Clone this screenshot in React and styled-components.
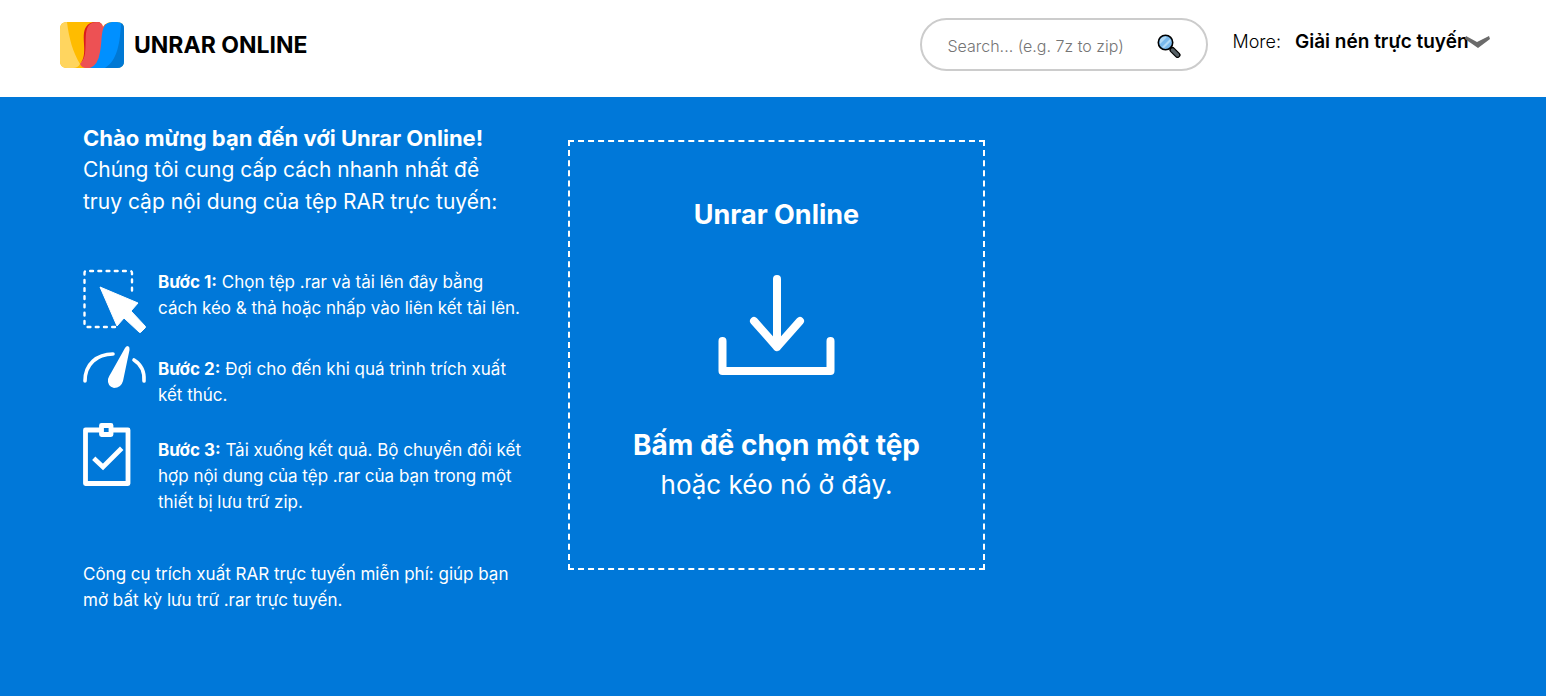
import React from "react";
import styled, { createGlobalStyle } from "styled-components";

const GlobalStyle = createGlobalStyle`
  * { box-sizing: border-box; }
  body {
    margin: 0;
    background: #0078d9;
    font-family: Inter, "Open Sans", sans-serif;
    font-size: 17px;
    line-height: 26px;
  }
  h1, h2, p, ol { margin: 0; padding: 0; }
`;

const Header = styled.header`
  display: flex;
  align-items: center;
  padding: 18px 56px 26px 60px;
  background: #fff;
  color: #000;
`;

const Brand = styled.a`
  display: flex;
  align-items: center;
  gap: 10px;
  margin-right: auto;
  color: #000;
  text-decoration: none;
  white-space: nowrap;
  font-size: 23px;
  font-weight: 700;
`;

const SearchForm = styled.form`
  display: flex;
  align-items: center;
  width: 288px;
  height: 53px;
  padding: 2px 25px 0 25px;
  border: 2px solid #ccc;
  border-radius: 27px;
`;

const SearchInput = styled.input`
  flex: 1;
  min-width: 0;
  padding: 0;
  border: 0;
  outline: 0;
  background: transparent;
  color: #333;
  font-family: inherit;
  font-size: 16px;
  font-weight: 300;
  &::placeholder { color: #757575; opacity: 1; }
`;

const SearchButton = styled.button`
  display: flex;
  padding: 0;
  border: 0;
  background: none;
  cursor: pointer;
`;

const More = styled.div`
  display: flex;
  align-items: center;
  gap: 14px;
  margin-left: 24px;
  padding-bottom: 5px;
  font-size: 18px;
`;

const MoreLabel = styled.label`
  font-weight: 300;
`;

const Picker = styled.div`
  position: relative;
  width: 195px;
  svg {
    position: absolute;
    right: 0;
    top: 7px;
    pointer-events: none;
  }
`;

const Select = styled.select`
  appearance: none;
  display: block;
  width: 100%;
  padding: 0;
  border: 0;
  background: transparent;
  color: #000;
  font-family: inherit;
  font-size: 19px;
  font-weight: 600;
  line-height: 26px;
`;

const Hero = styled.main`
  display: grid;
  grid-template-columns: 440fr 417fr 433fr;
  align-items: start;
  gap: 45px;
  padding: 25px 83px 83px;
  background: #0078d9;
  color: #fff;
`;

const About = styled.section`
  white-space: nowrap;
`;

const Intro = styled.div`
  font-size: 21px;
  line-height: 32px;
`;

const Welcome = styled.h2`
  font-size: 22px;
  font-weight: 700;
`;

const Steps = styled.ol`
  display: grid;
  gap: 13px;
  margin: 51px 0 46px;
  list-style: none;
`;

const StepRow = styled.li`
  display: flex;
  align-items: flex-start;
  gap: 11px;
  svg { flex: none; }
  p { padding-top: ${(p) => p.$drop}px; }
`;

const DropZone = styled.label`
  display: flex;
  flex-direction: column;
  align-items: center;
  margin-top: 18px;
  padding: 53px 20px 63px;
  border: 2px dashed #fff;
  font-size: 26px;
  line-height: 40px;
  text-align: center;
  cursor: pointer;
  svg { margin: 40px 0 49px; }
`;

const DropTitle = styled.h1`
  font-size: 27px;
  font-weight: 700;
`;

const DropPrompt = styled.b`
  font-size: 28px;
`;

const FileInput = styled.input`
  position: absolute;
  width: 1px;
  height: 1px;
  opacity: 0;
`;

const Logo = () => (
  <svg width="64" height="46" viewBox="0 0 64 46" aria-hidden="true">
    <defs>
      <clipPath id="logo-clip">
        <path d="M7 0H37Q42 0 43 5Q46 0 52 0H57Q64 0 64 7V39Q64 46 57 46H7Q0 46 0 39V7Q0 0 7 0Z" />
      </clipPath>
    </defs>
    <g clipPath="url(#logo-clip)">
      <rect width="64" height="46" fill="#ffbc00" />
      <path d="M0 0H7C9 17 13 30 20 42Q18 46 13 46H0Z" fill="#ffd55f" />
      <path d="M20 42C29 32 20 14 26 5Q29 0 36 0H40L30 30Z" fill="#da1c1c" />
      <path d="M20 42C30 34 22 11 29 3Q32 0 37 0H46V46H26Q22 46 20 42Z" fill="#ed5154" />
      <path d="M64 0H52C39 1 43 18 40 30Q38 43 30 46H64Z" fill="#0090ff" />
      <path d="M61 2L64 0V46H45C58 38 60 19 61 2Z" fill="#0078d4" />
    </g>
  </svg>
);

const Magnifier = () => (
  <svg width="24" height="24" viewBox="0 0 24 24" aria-hidden="true">
    <path d="M12.500 13L15 15.500" stroke="#000" strokeWidth="3" />
    <path d="M15.500 16L20.500 21" stroke="#000" strokeWidth="6" strokeLinecap="round" />
    <path d="M15.500 16L20.500 21" stroke="#586267" strokeWidth="3.500" strokeLinecap="round" />
    <circle cx="8.500" cy="8.500" r="7.200" fill="#79b9ed" stroke="#000" strokeWidth="1.600" />
    <path d="M3 10L10 3Q5 2 3 6Z M5 13L13 5L14 7L7 14Z" fill="#b2daf6" />
  </svg>
);

const Chevron = () => (
  <svg width="25" height="13" viewBox="0 0 25 13" aria-hidden="true">
    <path d="M1 0L12 6L24 0L25 3L13 12L0 3Z" fill="#6b6b6b" />
  </svg>
);

const SelectIcon = () => (
  <svg width="64" height="64" viewBox="0 0 64 64" aria-hidden="true">
    <path
      d="M32 58H3Q1.500 58 1.500 56V4Q1.500 2 3 2H47Q49 2 49 4V26"
      fill="none" stroke="#fff" strokeWidth="2.400" strokeDasharray="2.800 5.400" strokeLinecap="round"
    />
    <path d="M17 18L55 34L48 42L62 57Q63 58 62 59L58 63Q57 64 56 63L41 49L34 57Z" fill="#fff" stroke="#fff" strokeLinejoin="round" />
  </svg>
);

const GaugeIcon = () => (
  <svg width="64" height="64" viewBox="0 0 64 64" aria-hidden="true">
    <path d="M2 35C2 18 14 8 30 8M51 14Q62 21 61 35" fill="none" stroke="#fff" strokeWidth="3.600" strokeLinecap="round" />
    <path d="M42 2Q43 0 45 0Q47 1 46.500 4L40 35Q38 42 31 42Q24 40 25 33Q26 30 28 27Z" fill="#fff" />
  </svg>
);

const ClipboardIcon = () => (
  <svg width="64" height="64" viewBox="0 0 64 64" aria-hidden="true">
    <rect x="2.500" y="7" width="42.500" height="53.500" fill="none" stroke="#fff" strokeWidth="4.800" strokeLinejoin="round" />
    <rect x="18.500" y="2.500" width="9.500" height="9" fill="#0078d9" stroke="#fff" strokeWidth="4.800" strokeLinejoin="round" />
    <path d="M12.500 37L20 44L37 27" fill="none" stroke="#fff" strokeWidth="4.800" strokeLinecap="square" />
  </svg>
);

const UploadIcon = () => (
  <svg width="117" height="101" viewBox="0 0 117 101" aria-hidden="true">
    <g fill="none" stroke="#fff" strokeWidth="8" strokeLinecap="round" strokeLinejoin="round">
      <path d="M4.500 66V96H112.500V66" />
      <path d="M59 4V72M36 46L59 72L82 46" />
    </g>
  </svg>
);

const steps = [
  {
    icon: <SelectIcon />, drop: 0, title: "Bước 1:",
    lines: ["Chọn tệp .rar và tải lên đây bằng", "cách kéo & thả hoặc nhấp vào liên kết tải lên."],
  },
  {
    icon: <GaugeIcon />, drop: 10, title: "Bước 2:",
    lines: ["Đợi cho đến khi quá trình trích xuất", "kết thúc."],
  },
  {
    icon: <ClipboardIcon />, drop: 14, title: "Bước 3:",
    lines: ["Tải xuống kết quả. Bộ chuyển đổi kết", "hợp nội dung của tệp .rar của bạn trong một", "thiết bị lưu trữ zip."],
  },
];

const Lines = ({ items }) =>
  items.map((line, i) => (
    <React.Fragment key={line}>
      {i > 0 && <br />}
      {line}
    </React.Fragment>
  ));

export default function App() {
  return (
    <>
      <GlobalStyle />
      <Header>
        <Brand href="#">
          <Logo />
          UNRAR ONLINE
        </Brand>
        <SearchForm role="search" onSubmit={(e) => e.preventDefault()}>
          <SearchInput type="text" aria-label="Search" placeholder="Search... (e.g. 7z to zip)" />
          <SearchButton type="submit" aria-label="Search">
            <Magnifier />
          </SearchButton>
        </SearchForm>
        <More>
          <MoreLabel htmlFor="tool">More:</MoreLabel>
          <Picker>
            <Select id="tool">
              <option>Giải nén trực tuyến</option>
            </Select>
            <Chevron />
          </Picker>
        </More>
      </Header>
      <Hero>
        <About>
          <Intro>
            <Welcome>Chào mừng bạn đến với Unrar Online!</Welcome>
            <p>
              <Lines items={["Chúng tôi cung cấp cách nhanh nhất để", "truy cập nội dung của tệp RAR trực tuyến:"]} />
            </p>
          </Intro>
          <Steps>
            {steps.map((step) => (
              <StepRow key={step.title} $drop={step.drop}>
                {step.icon}
                <p>
                  <b>{step.title}</b> <Lines items={step.lines} />
                </p>
              </StepRow>
            ))}
          </Steps>
          <p>
            <Lines items={["Công cụ trích xuất RAR trực tuyến miễn phí: giúp bạn", "mở bất kỳ lưu trữ .rar trực tuyến."]} />
          </p>
        </About>
        <DropZone htmlFor="archive">
          <DropTitle>Unrar Online</DropTitle>
          <UploadIcon />
          <DropPrompt>Bấm để chọn một tệp</DropPrompt>
          <span>hoặc kéo nó ở đây.</span>
          <FileInput id="archive" type="file" />
        </DropZone>
      </Hero>
    </>
  );
}
